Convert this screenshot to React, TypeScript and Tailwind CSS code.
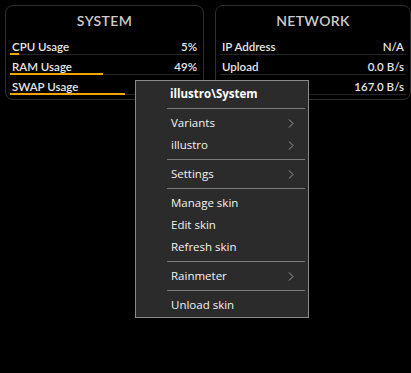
import React from "react";

const Row = ({ label, value, pct }: { label: string; value: string; pct?: number }) => (
  <div className="relative flex h-5 items-end justify-between border-b border-[#262626] px-[2px] pb-[2px] text-[11.5px] font-semibold leading-none text-[#e6e6e6]">
    <span>{label}</span>
    <span>{value}</span>
    {pct !== undefined && (
      <div className="absolute -bottom-px left-0 h-[2px] bg-[#f0a500]" style={{ width: `${pct}%` }} />
    )}
  </div>
);

const Panel = ({ title, children }: { title: string; children: React.ReactNode }) => (
  <div className="h-[95px] rounded-lg border border-[#2e2e2e] px-[4px] pt-[7px]">
    <div className="mb-[6px] text-center text-[14px] font-semibold leading-4 tracking-wide text-[#cccccc]">{title}</div>
    {children}
  </div>
);

const Item = ({ label, sub }: { label: string; sub?: boolean }) => (
  <div className="flex h-[22px] items-center justify-between pl-[35px] pr-[14px] text-[11.5px] text-[#f2f2f2]">
    <span>{label}</span>
    {sub && (
      <svg width="6" height="9" viewBox="0 0 6 9" fill="none" stroke="#9a9a9a" strokeWidth="1">
        <path d="M1 0.5 L5 4.5 L1 8.5" />
      </svg>
    )}
  </div>
);

const Sep = () => <div className="my-[3px] ml-[31px] mr-[3px] h-px bg-[#7a7a7a]" />;

export default function App() {
  return (
    <div className="relative h-[373px] w-[411px] overflow-hidden bg-black">
      <div className="grid grid-cols-[199px_196px] gap-[11px] pl-[5px] pt-[5px]" style={{ fontFamily: "Lato, 'Noto Sans', sans-serif" }}>
        <Panel title="SYSTEM">
          <Row label="CPU Usage" value="5%" pct={5} />
          <Row label="RAM Usage" value="49%" pct={49} />
          <Row label="SWAP Usage" value="" pct={61} />
        </Panel>
        <Panel title="NETWORK">
          <Row label="IP Address" value="N/A" />
          <Row label="Upload" value="0.0 B/s" />
          <Row label="Download" value="167.0 B/s" />
        </Panel>
      </div>

      <div className="absolute left-[135px] top-[80px] w-[174px] border border-[#8a8a8a] bg-[#2b2b2b] pb-px pt-[2px]" style={{ fontFamily: "'Open Sans', 'Noto Sans', sans-serif" }}>
        <div className="flex h-[22px] items-center pl-[34px] text-[11.5px] font-bold text-white">illustro\System</div>
        <Sep />
        <Item label="Variants" sub />
        <Item label="illustro" sub />
        <Sep />
        <Item label="Settings" sub />
        <Sep />
        <Item label="Manage skin" />
        <Item label="Edit skin" />
        <Item label="Refresh skin" />
        <Sep />
        <Item label="Rainmeter" sub />
        <Sep />
        <Item label="Unload skin" />
      </div>
    </div>
  );
}
